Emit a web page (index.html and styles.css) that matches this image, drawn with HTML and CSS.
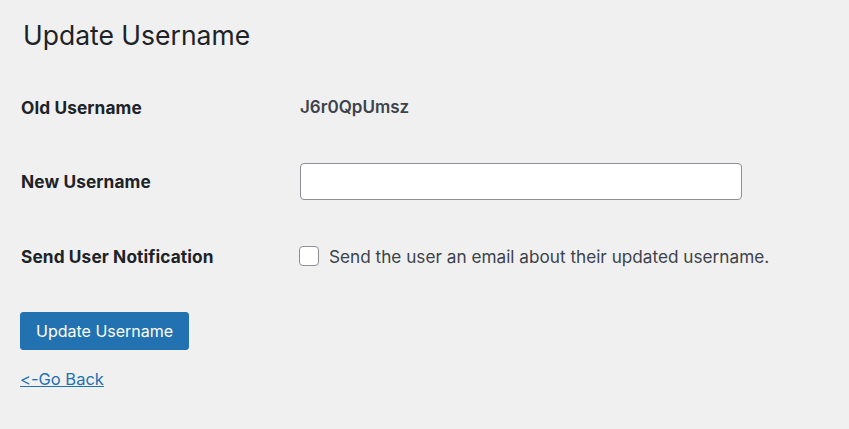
FILE: index.html
```html
<!DOCTYPE html>
<html lang="en">
<head>
<meta charset="utf-8">
<title>Update Username</title>
<link rel="stylesheet" href="styles.css">
</head>
<body>
<div class="wrap">
  <h1 class="page-title">Update Username</h1>
  <form class="form">
    <div class="form-row">
      <div class="form-label">Old Username</div>
      <div class="form-field value">J6r0QpUmsz</div>
    </div>
    <div class="form-row">
      <label class="form-label" for="new-username">New Username</label>
      <div class="form-field"><input id="new-username" class="text-input" type="text"></div>
    </div>
    <div class="form-row">
      <div class="form-label">Send User Notification</div>
      <div class="form-field">
        <label class="check-label"><input type="checkbox" class="checkbox"><span>Send the user an email about their updated username.</span></label>
      </div>
    </div>
    <div class="actions">
      <button type="button" class="button-primary">Update Username</button>
    </div>
    <a class="back-link" href="#">&lt;-Go Back</a>
  </form>
</div>
</body>
</html>
```

FILE: styles.css
```css
html, body {
  margin: 0;
  padding: 0;
  background: #f0f0f1;
}
body {
  font-family: Inter, "Noto Sans", "Liberation Sans", sans-serif;
  font-size: 17px;
  color: #1d2327;
  font-feature-settings: "calt" 0;
  font-variant-ligatures: none;
}
.wrap {
  padding: 0 20px;
}
.page-title {
  font-size: 26.5px;
  font-weight: 400;
  line-height: 36px;
  margin: 0;
  padding: 17px 0 0 3px;
  height: 53px;
  box-sizing: border-box;
  color: #1d2327;
}
.form {
  display: flex;
  flex-direction: column;
  padding-top: 17px;
}
.form-row {
  display: grid;
  grid-template-columns: 280px 1fr;
  align-items: center;
  height: 74.5px;
}
.form-label {
  font-weight: 650;
  font-size: 17.3px;
  letter-spacing: 0.1px;
  color: #1d2327;
  padding-left: 1px;
}
.value {
  font-weight: 600;
  color: #3c434a;
}
.text-input {
  width: 442px;
  height: 37px;
  box-sizing: border-box;
  border: 1px solid #8c8f94;
  border-radius: 4px;
  background: #fff;
  font: inherit;
  padding: 0 8px;
  margin: 0;
}
.check-label {
  display: flex;
  align-items: center;
  gap: 10px;
  color: #3c434a;
  font-size: 17.2px;
}
.checkbox {
  appearance: none;
  -webkit-appearance: none;
  width: 20px;
  height: 20px;
  margin: 0 0 0 -1px;
  border: 1px solid #8c8f94;
  border-radius: 4px;
  background: #fff;
  box-sizing: border-box;
}
.actions {
  padding-top: 18px;
}
.button-primary {
  height: 38px;
  padding: 0 15px;
  background: #2271b1;
  color: #fff;
  border: 1px solid #2271b1;
  border-radius: 3px;
  font: inherit;
  font-size: 16px;
  cursor: pointer;
}
.back-link {
  align-self: flex-start;
  margin-top: 19px;
  color: #2271b1;
  text-decoration: underline;
  font-size: 16.5px;
}
```
